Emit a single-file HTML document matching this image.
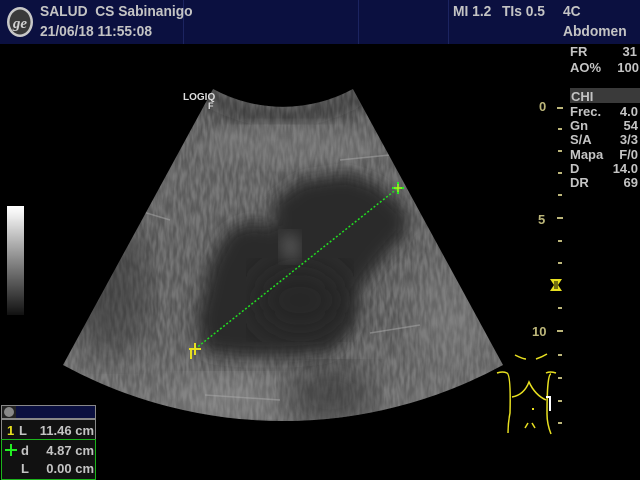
<!DOCTYPE html>
<html><head><meta charset="utf-8"><style>
html,body{margin:0;padding:0;background:#000;width:640px;height:480px;overflow:hidden;position:relative;font-family:"Liberation Sans",sans-serif;font-weight:bold}
.t{position:absolute;color:#c4c4c4;font-size:15px;white-space:nowrap;transform:scaleX(.92);transform-origin:0 0}
.r{position:absolute;color:#c4c4c4;font-size:13px;white-space:nowrap}
.y{position:absolute;color:#bdb77a;font-size:13px}
.tick{position:absolute;width:6px;height:2px;background:#bdb77a}
</style></head><body>
<div style="position:absolute;left:0;top:0;width:640px;height:44px;background:#0b1040"></div>
<div style="position:absolute;left:183px;top:0;width:1px;height:44px;background:#1c2460"></div>
<div style="position:absolute;left:358px;top:0;width:1px;height:44px;background:#1c2460"></div>
<div style="position:absolute;left:448px;top:0;width:1px;height:44px;background:#1c2460"></div>
<svg style="position:absolute;left:6px;top:4px" width="28" height="36" viewBox="0 0 28 36">
<ellipse cx="14" cy="18" rx="13" ry="15" fill="#c8c8c8"/><ellipse cx="14" cy="18" rx="10.5" ry="12.5" fill="#3a3a3a"/>
<text x="14" y="24" font-family="Liberation Serif" font-style="italic" font-size="15" fill="#d0d0d0" text-anchor="middle">ge</text></svg>
<div class="t" style="left:40px;top:3px">SALUD&nbsp; CS Sabinanigo</div>
<div class="t" style="left:40px;top:23px">21/06/18 11:55:08</div>
<div class="t" style="left:453px;top:3px">MI 1.2</div>
<div class="t" style="left:502px;top:3px">TIs 0.5</div>
<div class="t" style="left:563px;top:3px">4C</div>
<div class="t" style="left:563px;top:23px">Abdomen</div>
<div class="r" style="left:570px;top:44px">FR</div><div class="r" style="left:612px;top:44px;width:25px;text-align:right">31</div>
<div class="r" style="left:570px;top:60px">AO%</div><div class="r" style="left:612px;top:60px;width:27px;text-align:right">100</div>
<div style="position:absolute;left:570px;top:88px;width:70px;height:15px;background:#3a3a3a"></div>
<div class="r" style="left:571px;top:89px">CHI</div>
<div class="r" style="left:570px;top:104px">Frec.</div><div class="r" style="left:600px;top:104px;width:38px;text-align:right">4.0</div>
<div class="r" style="left:570px;top:118px">Gn</div><div class="r" style="left:600px;top:118px;width:38px;text-align:right">54</div>
<div class="r" style="left:570px;top:132px">S/A</div><div class="r" style="left:600px;top:132px;width:38px;text-align:right">3/3</div>
<div class="r" style="left:570px;top:147px">Mapa</div><div class="r" style="left:600px;top:147px;width:38px;text-align:right">F/0</div>
<div class="r" style="left:570px;top:161px">D</div><div class="r" style="left:600px;top:161px;width:38px;text-align:right">14.0</div>
<div class="r" style="left:570px;top:175px">DR</div><div class="r" style="left:600px;top:175px;width:38px;text-align:right">69</div>
<div class="y" style="left:539px;top:99px">0</div>
<div class="y" style="left:538px;top:212px">5</div>
<div class="y" style="left:532px;top:324px">10</div>
<div class="tick" style="left:557px;top:107px"></div><div class="tick" style="left:558px;top:128px;width:4px"></div>
<div class="tick" style="left:558px;top:150px;width:4px"></div><div class="tick" style="left:558px;top:172px;width:4px"></div>
<div class="tick" style="left:558px;top:194px;width:4px"></div><div class="tick" style="left:557px;top:217px"></div>
<div class="tick" style="left:558px;top:240px;width:4px"></div><div class="tick" style="left:558px;top:262px;width:4px"></div>
<div class="tick" style="left:558px;top:307px;width:4px"></div><div class="tick" style="left:557px;top:330px"></div>
<div class="tick" style="left:558px;top:354px;width:4px"></div><div class="tick" style="left:558px;top:377px;width:4px"></div>
<div class="tick" style="left:558px;top:400px;width:4px"></div><div class="tick" style="left:558px;top:422px;width:4px"></div>
<svg style="position:absolute;left:549px;top:278px" width="14" height="14"><path d="M1 1h12l-4 6 4 6H1l4-6z" fill="#e8e020"/><path d="M6 3v8M8 3v8" stroke="#000" stroke-width="1"/></svg>
<div style="position:absolute;left:7px;top:206px;width:17px;height:109px;background:linear-gradient(#fff,#f0f0f0 8%,#888 50%,#111)"></div>

<svg style="position:absolute;left:0;top:0" width="640" height="480">
<defs>
<clipPath id="sec"><path d="M213.1 89 A146 146 0 0 0 352.9 89 L503 365 A460 460 0 0 1 63 365 Z"/></clipPath>
<filter id="n" x="0" y="0" width="100%" height="100%"><feTurbulence type="fractalNoise" baseFrequency="0.3 0.07" numOctaves="2" seed="3"/><feColorMatrix type="matrix" values="0 0 0 0 0.5 0 0 0 0 0.5 0 0 0 0 0.5 0 0 0 -2.2 1.6"/></filter>
<filter id="b"><feGaussianBlur stdDeviation="8"/></filter>
<filter id="b2"><feGaussianBlur stdDeviation="16"/></filter>
<radialGradient id="g" cx="283" cy="-39" r="470" gradientUnits="userSpaceOnUse"><stop offset="0.3" stop-color="#505050"/><stop offset="0.5" stop-color="#5c5c5c"/><stop offset="0.8" stop-color="#555"/><stop offset="1" stop-color="#666"/></radialGradient>
</defs>
<g clip-path="url(#sec)">
<rect x="60" y="85" width="450" height="340" fill="url(#g)"/>
<rect x="60" y="85" width="450" height="340" filter="url(#n)" opacity="0.3"/>
<path d="M200 88 A146 146 0 0 0 366 88 L366 96 A150 150 0 0 1 200 96Z" fill="#1a1a1a" filter="url(#b)"/>
<ellipse cx="290" cy="145" rx="90" ry="22" fill="#999" opacity="0.3" filter="url(#b)"/>
<ellipse cx="110" cy="290" rx="40" ry="70" fill="#333" opacity="0.5" filter="url(#b2)"/>
<ellipse cx="450" cy="310" rx="40" ry="50" fill="#999" opacity="0.3" filter="url(#b2)"/>
<ellipse cx="230" cy="395" rx="60" ry="20" fill="#aaa" opacity="0.35" filter="url(#b2)"/>
<ellipse cx="330" cy="395" rx="45" ry="30" fill="#333" opacity="0.6" filter="url(#b2)"/>
<path d="M273 200 L300 180 347 173 377 183 407 210 407 233 380 263 360 290 357 323 333 353 293 357 243 357 203 353 197 317 210 263 227 230 253 220 273 227Z" fill="#2a2a2a" filter="url(#b)"/>
<ellipse cx="300" cy="300" rx="45" ry="35" fill="#262626" filter="url(#b2)"/>
<path d="M280 238 L292 232 300 245 295 262 285 258Z" fill="#6a6a6a" filter="url(#b)" opacity="0.8"/>
<path d="M120 205 L170 220 M370 333 L420 325 M205 395 L280 400 M340 160 L390 155" stroke="#aaa" stroke-width="1.5" opacity="0.5"/>
</g>
<text x="183" y="100" fill="#ddd" font-size="10" font-weight="bold" font-family="Liberation Sans">LOGIQ</text>
<text x="208" y="109" fill="#ddd" font-size="9" font-weight="bold" font-family="Liberation Sans">F</text>
<line x1="195" y1="349" x2="398" y2="188" stroke="#22dd22" stroke-width="1.5" stroke-dasharray="2 2"/>
<path d="M392 188h12M398 182v12" stroke="#22ee22" stroke-width="2"/>
<path d="M398 184v8M394 188h8" stroke="#e8e020" stroke-width="1"/>
<path d="M189 349h12M195 343v12M191 350v9" stroke="#e8e020" stroke-width="2"/>
<g stroke="#e8e020" stroke-width="1.5" fill="none">
<path d="M515 355q8 4 11 4M536 359q6-2 11-5"/>
<path d="M497 373q6-2 10 0t3 40q-2 10-2 20M546 373q4-2 10 0M551 374q-4 0-4 40 0 10 4 20"/>
<path d="M512 397q12-2 17-15 6 13 17 18"/>
<path d="M528 423l-3 5M532 423l3 5"/>
</g>
<path d="M546 397h4v14" stroke="#fff" stroke-width="2" fill="none"/>
<rect x="532" y="408" width="2" height="2" fill="#e8e020"/>
</svg>

<div style="position:absolute;left:1px;top:405px;width:95px;height:75px;background:#111"></div>
<div style="position:absolute;left:1px;top:405px;width:95px;height:14px;border:1px solid #888;box-sizing:border-box;background:#0b1040"></div>
<div style="position:absolute;left:2px;top:406px;width:14px;height:12px;background:#222"></div>
<div style="position:absolute;left:4px;top:407px;width:10px;height:10px;border-radius:50%;background:#888"></div>
<div style="position:absolute;left:1px;top:419px;width:95px;height:81px;border:1px solid #888;box-sizing:border-box"></div>
<div style="position:absolute;left:1px;top:439px;width:95px;height:41px;border:1px solid #1cb41c;box-sizing:border-box"></div>
<div class="r" style="left:7px;top:423px;color:#e8e020">1</div>
<div class="r" style="left:19px;top:423px">L</div><div class="r" style="left:30px;top:423px;width:64px;text-align:right">11.46 cm</div>
<svg style="position:absolute;left:4px;top:443px" width="14" height="14"><path d="M1 7h12M7 1v12" stroke="#22ee22" stroke-width="2"/></svg>
<div class="r" style="left:21px;top:443px">d</div><div class="r" style="left:30px;top:443px;width:64px;text-align:right">4.87 cm</div>
<div class="r" style="left:21px;top:461px">L</div><div class="r" style="left:30px;top:461px;width:64px;text-align:right">0.00 cm</div>
</body></html>
